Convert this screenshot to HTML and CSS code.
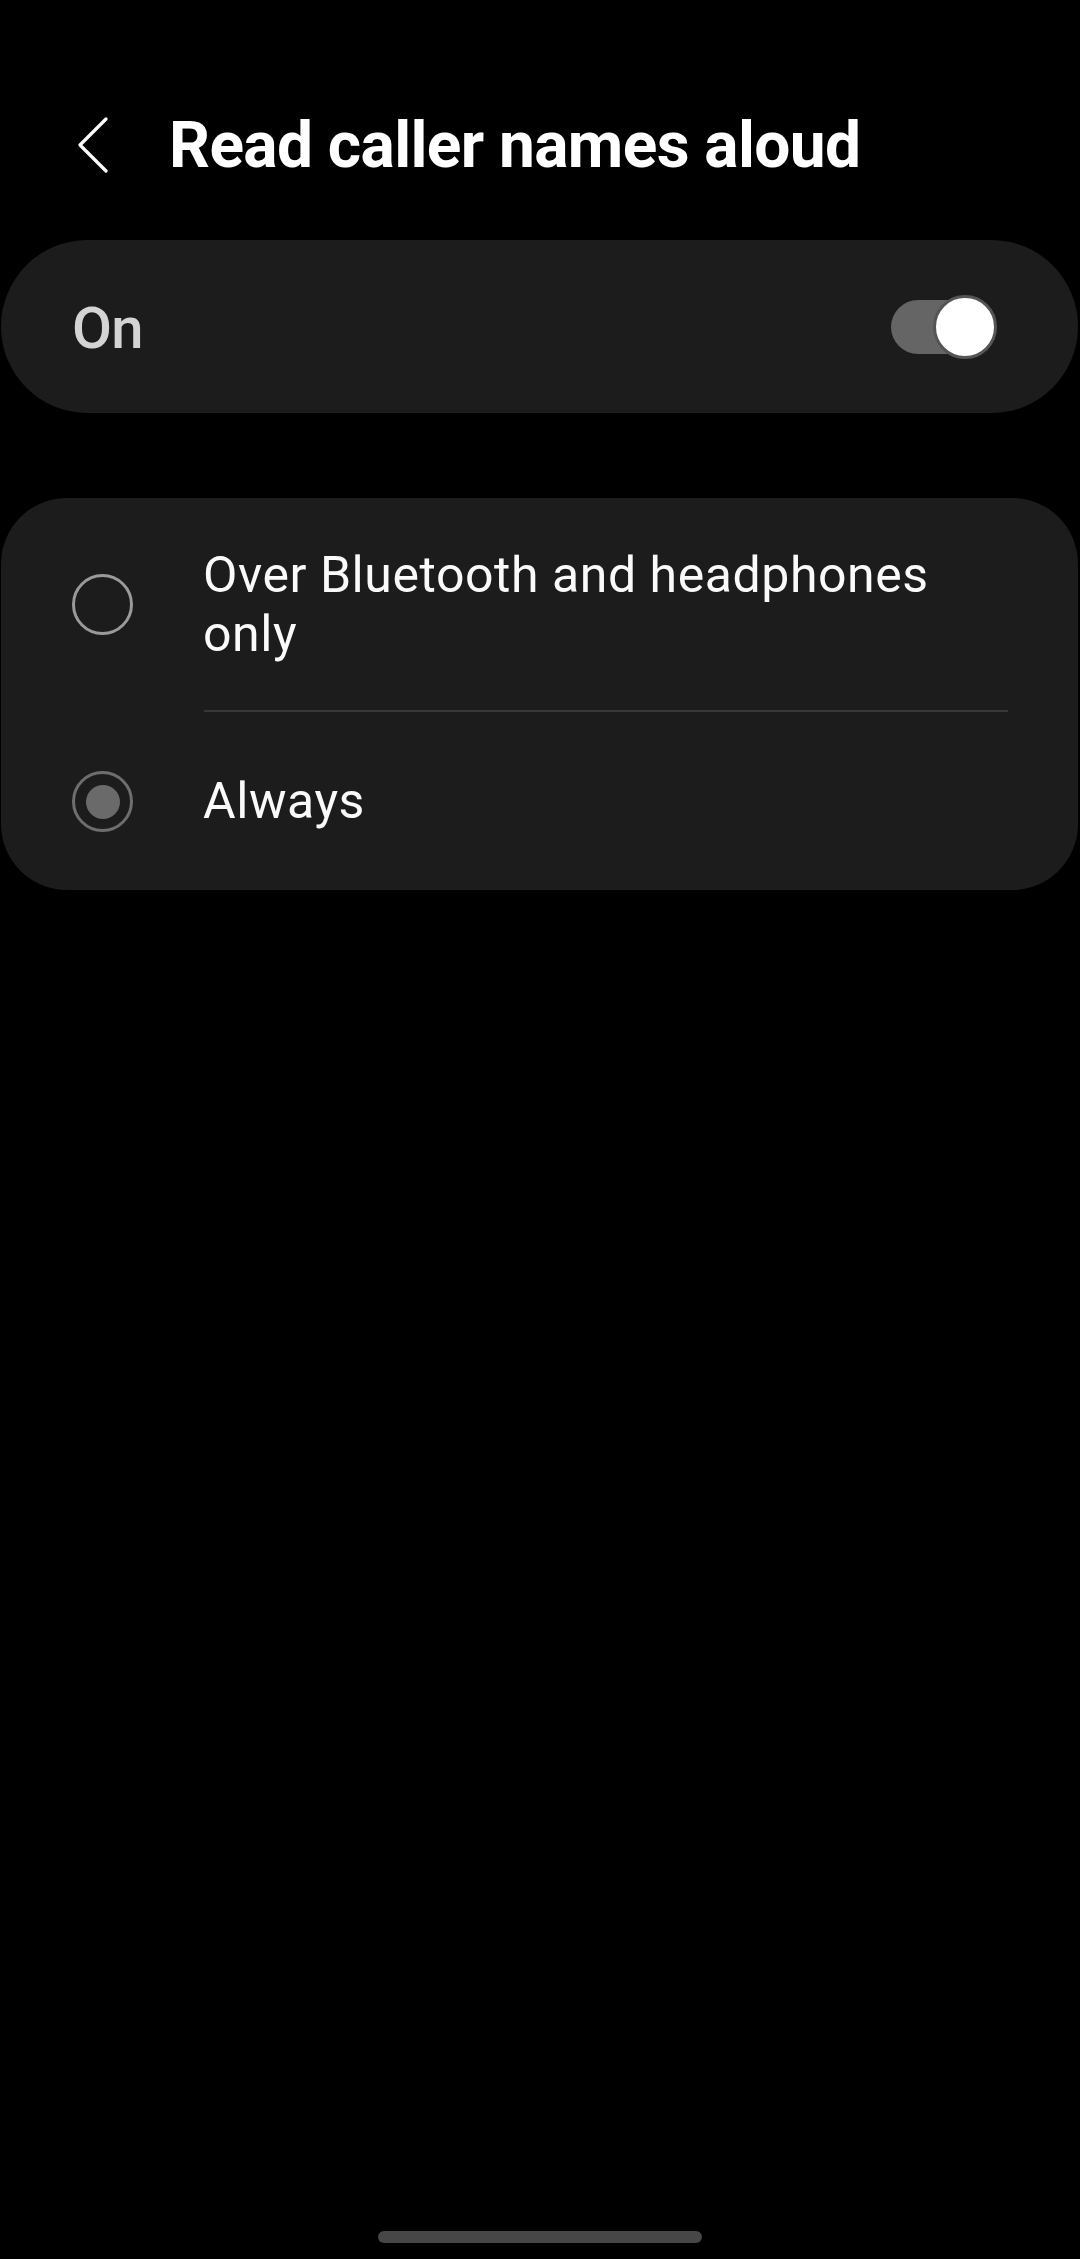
FILE: index.html
```html
<!DOCTYPE html>
<html lang="en">
<head>
<meta charset="utf-8">
<title>Read caller names aloud</title>
<link rel="stylesheet" href="styles.css">
</head>
<body>
<div class="page">
  <header class="header">
    <span class="back" aria-label="Back">
      <svg width="32" height="56" viewBox="0 0 32 56"><polyline points="29,2 3,28 29,54" fill="none" stroke="#ffffff" stroke-width="3.2" stroke-linecap="round" stroke-linejoin="round"/></svg>
    </span>
    <h1 class="title">Read caller names aloud</h1>
  </header>

  <section class="card master">
    <span class="master-label">On</span>
    <span class="switch">
      <span class="track"></span>
      <span class="knob"></span>
    </span>
  </section>

  <section class="card options">
    <div class="option first">
      <span class="radio"></span>
      <span class="option-text">Over Bluetooth and headphones<br>only</span>
    </div>
    <div class="divider"></div>
    <div class="option second">
      <span class="radio checked"><span class="dot"></span></span>
      <span class="option-text">Always</span>
    </div>
  </section>

  <div class="home">
    <span class="home-bar"></span>
  </div>
</div>
</body>
</html>
```

FILE: styles.css
```css
html, body {
  margin: 0;
  padding: 0;
  background: #000000;
}

body {
  font-family: Roboto, "Noto Sans", "Liberation Sans", sans-serif;
  color: #fafafa;
}

.page {
  min-height: 100vh;
  display: flex;
  flex-direction: column;
}

.header {
  display: flex;
  align-items: center;
  padding: 108px 0 0 77px;
  height: 76px;
  margin-bottom: 56px;
}

.back {
  display: flex;
  width: 32px;
  height: 56px;
  margin-top: -2px;
}

.title {
  margin: 0 0 0 60px;
  font-size: 64px;
  line-height: 76px;
  font-weight: 700;
  letter-spacing: -0.6px;
  color: #ffffff;
}

.card {
  background: #1c1c1c;
  margin: 0 2px 0 1px;
}

.master {
  height: 173px;
  border-radius: 87px;
  display: flex;
  align-items: center;
  justify-content: space-between;
  padding: 0 81px 0 71px;
  margin-bottom: 85px;
}

.master-label {
  font-size: 58px;
  font-weight: 500;
  letter-spacing: -0.8px;
  color: #d4d4d4;
  line-height: 1;
  margin-top: 2px;
}

.switch {
  position: relative;
  width: 106px;
  height: 64px;
  margin-top: 1px;
}

.track {
  position: absolute;
  left: 0;
  top: 5px;
  width: 100px;
  height: 54px;
  border-radius: 27px;
  background: #656565;
}

.knob {
  position: absolute;
  right: 0;
  top: 0;
  width: 58px;
  height: 58px;
  border-radius: 50%;
  background: #ffffff;
  border: 3px solid #555555;
}

.options {
  border-radius: 66px;
  display: flex;
  flex-direction: column;
}

.option {
  display: flex;
  align-items: center;
  padding-left: 71px;
}

.option.first {
  padding-top: 48px;
  padding-bottom: 46px;
}

.option.second {
  padding-top: 59px;
  padding-bottom: 58px;
}

.radio {
  flex: none;
  width: 55px;
  height: 55px;
  border-radius: 50%;
  border: 3px solid #9a9a9a;
  display: flex;
  align-items: center;
  justify-content: center;
  margin-right: 70px;
}

.first .radio {
  margin-top: -2px;
}

.radio.checked {
  border-color: #6e6e6e;
}

.dot {
  width: 34px;
  height: 34px;
  border-radius: 50%;
  background: #6a6a6a;
}

.option-text {
  font-size: 50px;
  line-height: 59px;
  font-weight: 400;
  letter-spacing: 0.55px;
  color: #fafafa;
}

.divider {
  height: 2px;
  background: #383838;
  margin: 0 70px 0 203px;
}

.home {
  margin-top: auto;
  display: flex;
  justify-content: center;
  padding-bottom: 16px;
}

.home-bar {
  width: 324px;
  height: 12px;
  border-radius: 6px;
  background: #474747;
}
```
